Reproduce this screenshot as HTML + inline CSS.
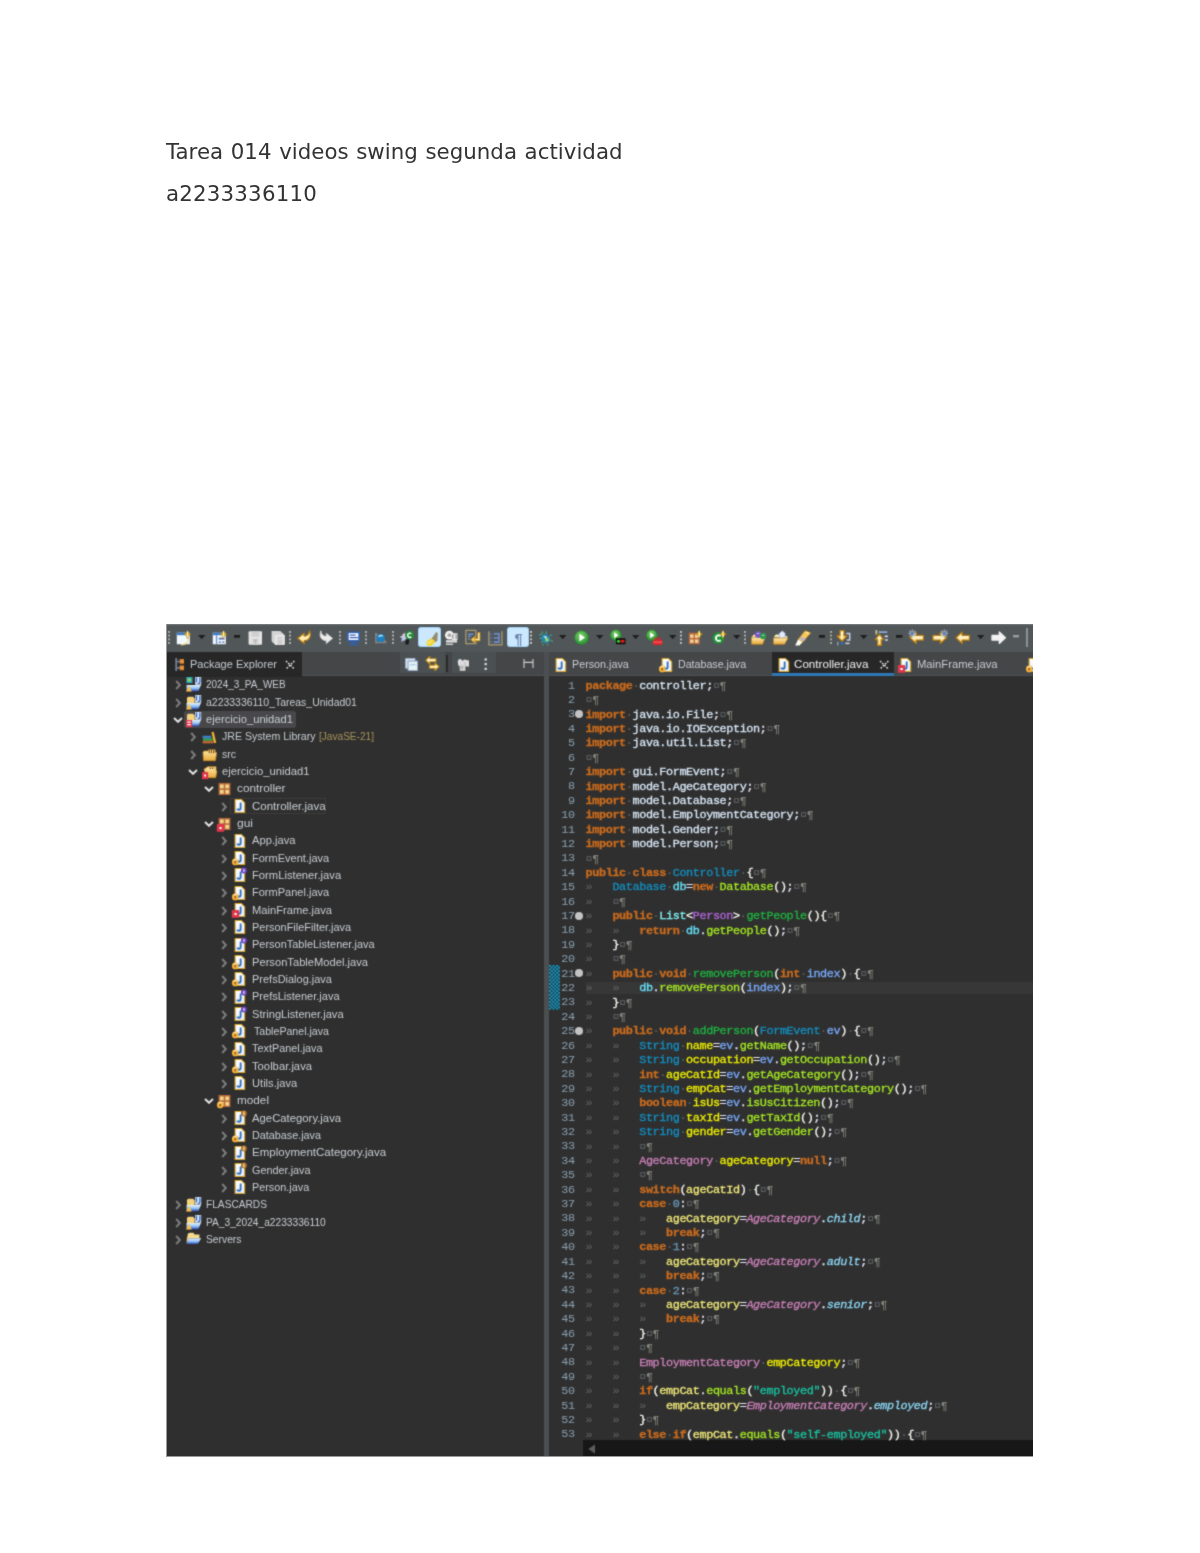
<!DOCTYPE html>
<html lang="es">
<head>
<meta charset="utf-8">
<title>Tarea 014 videos swing segunda actividad</title>
<style>
html,body{margin:0;padding:0;background:#fff;}
body{width:1200px;height:1553px;position:relative;overflow:hidden;font-family:"Liberation Sans", sans-serif;}
.h{position:absolute;left:166.1px;font-family:"DejaVu Sans", "Liberation Sans", sans-serif;font-size:21.33px;line-height:30px;color:#333;white-space:pre;margin:0;font-weight:normal;will-change:transform;}
#shot{position:absolute;left:167.0px;top:624.0px;width:866.0px;height:832.0px;background:#2f2f2f;overflow:hidden;filter:url(#soft);}
#shot div,#shot span,#shot svg{position:absolute;}
#shot span{white-space:pre;transform-origin:0 50%;}
#code span{position:static;}
#code div{white-space:pre;font-family:"Liberation Mono", monospace;}

#code div{left:418.60px;height:14.4px;line-height:14.4px;font-size:11.8px;letter-spacing:-0.381px;color:#d9e8f7;-webkit-text-stroke:0.3px;}
#code div.ln{left:auto;right:458.40px;color:#8aa0b0;text-align:right;margin-top:-0.3px;-webkit-text-stroke:0;}
#code{left:0;top:0;width:100%;height:100%;}
#code i.fo{position:absolute;left:408.00px;width:8px;height:8px;border-radius:50%;background:#c4c4c4;}
.k{color:#cc6c1d;font-weight:bold} .c{color:#1290c3} .i{color:#80f2f6} .e{color:#cc81ba} .ei{color:#cc81ba;font-style:italic}
.md{color:#1eb540} .mi{color:#a7ec21} .lv{color:#f2f200} .lr{color:#f3ec79} .p{color:#79abff} .f{color:#66e1f8}
.sf{color:#8ddaf8;font-style:italic} .s{color:#17c6a3} .n{color:#6897bb} .b{color:#f9faf4} .o{color:#e6e6fa} .ta{color:#b166da}
.w{color:#62676b;-webkit-text-stroke:0} .pm{color:#86867f;-webkit-text-stroke:0}

.edge{position:absolute;background:#333;}
</style>
</head>
<body>
<svg width="0" height="0" style="position:absolute"><defs><filter id="soft" x="0" y="0" width="1" height="1" color-interpolation-filters="sRGB"><feConvolveMatrix order="3" kernelMatrix="1 3 1 3 14 3 1 3 1" divisor="30" edgeMode="duplicate" preserveAlpha="false"/></filter></defs></svg>
<h1 class="h" style="top:137.4px;word-spacing:0.8px;letter-spacing:0.02px">Tarea 014 videos swing segunda actividad</h1>
<p class="h" style="top:179.4px;letter-spacing:0.2px">a2233336110</p>
<div class="edge" style="left:166px;top:624px;width:1px;height:832.5px;opacity:.5"></div><div class="edge" style="left:166.5px;top:1456px;width:866.5px;height:1px;opacity:.5"></div>
<div id="shot">
<div style="left:-1.00px;top:0.00px;width:868.00px;height:27.75px;background:#515658;"></div>
<div style="left:-1.00px;top:27.75px;width:378.00px;height:24.50px;background:#444648;"></div>
<div style="left:382.00px;top:27.75px;width:484.00px;height:24.50px;background:#444648;"></div>
<div style="left:-1.00px;top:27.75px;width:135.90px;height:25.00px;background:#272727;"></div>
<div style="left:605.25px;top:27.75px;width:121.50px;height:24.50px;background:#272727;"></div>
<div style="left:605.25px;top:49.00px;width:121.50px;height:3.30px;background:#2e78b8;"></div>
<div style="left:377.00px;top:27.75px;width:5.00px;height:804.75px;background:#4b4f51;"></div>
<div style="left:135.00px;top:51.05px;width:242.00px;height:1.20px;background:#4e5052;"></div>
<div style="left:382.00px;top:51.05px;width:223.25px;height:1.20px;background:#4e5052;"></div>
<div style="left:726.75px;top:51.05px;width:139.25px;height:1.20px;background:#4e5052;"></div>
<div style="left:233.00px;top:28.40px;width:44.60px;height:21.00px;background:#4b5052;border-radius:1px;"></div>
<div style="left:279.00px;top:30.60px;width:1.80px;height:17.40px;background:#2a2a2a;"></div>
<div style="left:284.90px;top:28.40px;width:43.80px;height:21.00px;background:#4b5052;border-radius:1px;"></div>
<span style='top:32.30px;font-size:11.8px;line-height:16px;color:#c9cdd2;left:23.00px;transform:scaleX(0.934);'>Package Explorer</span>
<span style='top:32.30px;font-size:11.8px;line-height:16px;color:#c9cdd2;left:405.00px;transform:scaleX(0.911);'>Person.java</span>
<span style='top:32.30px;font-size:11.8px;line-height:16px;color:#c9cdd2;left:510.50px;transform:scaleX(0.903);'>Database.java</span>
<span style='top:32.30px;font-size:11.8px;line-height:16px;color:#f0f0f0;left:627.40px;transform:scaleX(0.986);'>Controller.java</span>
<span style='top:32.30px;font-size:11.8px;line-height:16px;color:#c9cdd2;left:750.00px;transform:scaleX(0.952);'>MainFrame.java</span>
<div style="left:16.60px;top:86.60px;width:112.80px;height:17.40px;background:#48484a;border-radius:2.5px;"></div>
<div style="left:63.40px;top:173.60px;width:96px;height:16px;border:0.7px solid #3d3d3d;box-sizing:border-box;"></div>
<svg width="0" height="0" style="left:0;top:0"><defs>
<linearGradient id="gy" x1="0" y1="0" x2="0" y2="1"><stop offset="0" stop-color="#fffdf2"/><stop offset="1" stop-color="#ffe08a"/></linearGradient>
<linearGradient id="gb" x1="0" y1="0" x2="0" y2="1"><stop offset="0" stop-color="#eaf4ff"/><stop offset="0.55" stop-color="#8fc0f5"/><stop offset="1" stop-color="#2c49b8"/></linearGradient>
<linearGradient id="gp" x1="0" y1="0" x2="0" y2="1"><stop offset="0" stop-color="#ffffff"/><stop offset="1" stop-color="#e4ecfb"/></linearGradient>
<radialGradient id="gg" cx="0.45" cy="0.35" r="0.7"><stop offset="0" stop-color="#7fd06a"/><stop offset="1" stop-color="#1f8f2c"/></radialGradient>
<linearGradient id="gf" x1="0" y1="0" x2="0" y2="1"><stop offset="0" stop-color="#fdecb0"/><stop offset="1" stop-color="#e9a93a"/></linearGradient>
</defs></svg>
<svg style="left:8.10px;top:56.30px;" width="6.00" height="10.00" viewBox="0 0 6 10"><path d="M1.2 1 L4.8 5 L1.2 9" fill="none" stroke="#7c7c7c" stroke-width="2"/></svg>
<svg style="left:19.20px;top:53.30px;overflow:visible;" width="15.40" height="15.40" viewBox="0 0 16 16"><rect x="0.4" y="0" width="6.4" height="6.4" fill="#2aa6b8"/><circle cx="3.4" cy="3" r="2" fill="#8fd06a"/><rect x="9.6" y="0" width="6.2" height="8" fill="#e8f0ff"/><path d="M11 0.6v5.2M14.4 0.6v4.6c0 1.4-1 1.8-2.2 1.6" fill="none" stroke="#3a6fc4" stroke-width="1.5"/><path d="M0.6 8.2h15l-2.8 6.6h-12.2z" fill="url(#gb)"/><path d="M3 8.8l3 6.4h-6z" fill="#f6c04a"/></svg>
<span style='top:52.40px;font-size:11.8px;line-height:16px;color:#c9cdd2;left:39.00px;transform:scaleX(0.845);'>2024_3_PA_WEB</span>
<svg style="left:8.10px;top:73.63px;" width="6.00" height="10.00" viewBox="0 0 6 10"><path d="M1.2 1 L4.8 5 L1.2 9" fill="none" stroke="#7c7c7c" stroke-width="2"/></svg>
<svg style="left:19.20px;top:70.63px;overflow:visible;" width="15.40" height="15.40" viewBox="0 0 16 16"><path d="M1 3.4c0-1 1-1.6 2-1.6h4.4l1.6 1.8v4.6h-8z" fill="#f5d27c"/><rect x="9.6" y="0" width="6.2" height="8" fill="#e8f0ff"/><path d="M11 0.6v5.2M14.4 0.6v4.6c0 1.4-1 1.8-2.2 1.6" fill="none" stroke="#3a6fc4" stroke-width="1.5"/><path d="M0.6 8.2h15l-2.8 6.6h-12.2z" fill="url(#gb)"/><path d="M3 8.8l3 6.4h-6z" fill="#f6c04a"/></svg>
<span style='top:69.73px;font-size:11.8px;line-height:16px;color:#c9cdd2;left:39.00px;transform:scaleX(0.886);'>a2233336110_Tareas_Unidad01</span>
<svg style="left:6.10px;top:92.96px;" width="10.00" height="6.00" viewBox="0 0 10 6"><path d="M1 1 L5 4.800 L9 1" fill="none" stroke="#e2e2e2" stroke-width="2"/></svg>
<svg style="left:19.20px;top:87.96px;overflow:visible;" width="15.40" height="15.40" viewBox="0 0 16 16"><path d="M1 3.4c0-1 1-1.6 2-1.6h4.4l1.6 1.8v4.6h-8z" fill="#f5d27c"/><rect x="9.6" y="0" width="6.2" height="8" fill="#e8f0ff"/><path d="M11 0.6v5.2M14.4 0.6v4.6c0 1.4-1 1.8-2.2 1.6" fill="none" stroke="#3a6fc4" stroke-width="1.5"/><path d="M0.6 8.2h15l-2.8 6.6h-12.2z" fill="url(#gb)"/><rect x="0" y="8.4" width="6.4" height="7.4" fill="#e0364a"/><path d="M1.4 10.6h3.6m-3.6 2.6h3.6" stroke="#fff" stroke-width="1.2"/></svg>
<span style='top:87.06px;font-size:11.8px;line-height:16px;color:#c9cdd2;left:39.00px;transform:scaleX(0.947);'>ejercicio_unidad1</span>
<svg style="left:23.00px;top:108.29px;" width="6.00" height="10.00" viewBox="0 0 6 10"><path d="M1.2 1 L4.8 5 L1.2 9" fill="none" stroke="#7c7c7c" stroke-width="2"/></svg>
<svg style="left:34.60px;top:105.29px;overflow:visible;" width="15.40" height="15.40" viewBox="0 0 16 16"><rect x="0.6" y="7" width="9" height="2.6" fill="#3f7fc9"/><rect x="1" y="9.6" width="10" height="2.6" fill="#2fa25a"/><rect x="0.6" y="12.2" width="11" height="2.8" fill="#b8652e"/><path d="M11 3l2.6 11.6" stroke="#f3b42e" stroke-width="2.4"/></svg>
<span style='top:104.39px;font-size:11.8px;line-height:16px;color:#c9cdd2;left:54.50px;transform:scaleX(0.897);'>JRE System Library</span>
<span style='top:104.39px;font-size:11.8px;line-height:16px;color:#a9935c;left:152.00px;transform:scaleX(0.856);'>[JavaSE-21]</span>
<svg style="left:23.00px;top:125.62px;" width="6.00" height="10.00" viewBox="0 0 6 10"><path d="M1.2 1 L4.8 5 L1.2 9" fill="none" stroke="#7c7c7c" stroke-width="2"/></svg>
<svg style="left:34.60px;top:122.62px;overflow:visible;" width="15.40" height="15.40" viewBox="0 0 16 16"><path d="M1 6c0-1 .6-1.8 1.8-1.8h3.8v-1.4h7v3h1.6l-1.2 8.4h-12.4z" fill="url(#gf)" stroke="#c98b22" stroke-width="0.8"/><path d="M7.6 2.6v4m2.2-4.6v4.6m2.2-4v4" stroke="#7a4a1a" stroke-width="1.1"/></svg>
<span style='top:121.72px;font-size:11.8px;line-height:16px;color:#c9cdd2;left:54.50px;transform:scaleX(0.896);'>src</span>
<svg style="left:21.00px;top:144.95px;" width="10.00" height="6.00" viewBox="0 0 10 6"><path d="M1 1 L5 4.800 L9 1" fill="none" stroke="#e2e2e2" stroke-width="2"/></svg>
<svg style="left:34.60px;top:139.95px;overflow:visible;" width="15.40" height="15.40" viewBox="0 0 16 16"><path d="M2 5.4l4-2.6h8.6v4l1 .6-1.4 6.8h-9z" fill="url(#gf)" stroke="#c98b22" stroke-width="0.8"/><path d="M8 4.4h5" stroke="#7a4a1a" stroke-width="1.6" stroke-dasharray="1.4 1"/><rect x="0" y="8.4" width="6.4" height="7.4" fill="#e0364a"/><rect x="2.2" y="11" width="2" height="2" fill="#fff"/></svg>
<span style='top:139.05px;font-size:11.8px;line-height:16px;color:#c9cdd2;left:54.50px;transform:scaleX(0.953);'>ejercicio_unidad1</span>
<svg style="left:36.70px;top:162.28px;" width="10.00" height="6.00" viewBox="0 0 10 6"><path d="M1 1 L5 4.800 L9 1" fill="none" stroke="#e2e2e2" stroke-width="2"/></svg>
<svg style="left:50.00px;top:157.28px;overflow:visible;" width="15.40" height="15.40" viewBox="0 0 16 16"><rect x="1.6" y="2" width="12.4" height="12.6" fill="#b4653a"/><rect x="3" y="3.6" width="4" height="4" fill="#f1d48a"/><rect x="8.6" y="3.6" width="4" height="4" fill="#f1d48a"/><rect x="3" y="9.2" width="4" height="4" fill="#f1d48a"/><rect x="8.6" y="9.2" width="4" height="4" fill="#f1d48a"/></svg>
<span style='top:156.38px;font-size:11.8px;line-height:16px;color:#c9cdd2;left:70.00px;'>controller</span>
<svg style="left:53.90px;top:177.61px;" width="6.00" height="10.00" viewBox="0 0 6 10"><path d="M1.2 1 L4.8 5 L1.2 9" fill="none" stroke="#7c7c7c" stroke-width="2"/></svg>
<svg style="left:65.40px;top:174.01px;overflow:visible;" width="15.40" height="15.40" viewBox="0 0 16 16"><path d="M3.2 1.6h6.6l3.4 3.4v10h-10z" fill="url(#gp)" stroke="#d5a327" stroke-width="1.1" stroke-linejoin="round"/><path d="M9 4.6v5.6c0 1.4-.8 2-1.9 2-.8 0-1.4-.3-1.8-1" fill="none" stroke="#2e6cb6" stroke-width="1.9"/></svg>
<span style='top:173.71px;font-size:11.8px;line-height:16px;color:#c9cdd2;left:85.40px;transform:scaleX(0.976);'>Controller.java</span>
<svg style="left:36.70px;top:196.94px;" width="10.00" height="6.00" viewBox="0 0 10 6"><path d="M1 1 L5 4.800 L9 1" fill="none" stroke="#e2e2e2" stroke-width="2"/></svg>
<svg style="left:50.00px;top:191.94px;overflow:visible;" width="15.40" height="15.40" viewBox="0 0 16 16"><rect x="1.6" y="2" width="12.4" height="12.6" fill="#b4653a"/><rect x="3" y="3.6" width="4" height="4" fill="#f1d48a"/><rect x="8.6" y="3.6" width="4" height="4" fill="#f1d48a"/><rect x="3" y="9.2" width="4" height="4" fill="#f1d48a"/><rect x="8.6" y="9.2" width="4" height="4" fill="#f1d48a"/><rect x="-0.200" y="8.400" width="7.600" height="8" fill="#e0364a"/><rect x="2.600" y="11.400" width="2.200" height="2.200" fill="#fff"/></svg>
<span style='top:191.04px;font-size:11.8px;line-height:16px;color:#c9cdd2;left:70.00px;transform:scaleX(1.016);'>gui</span>
<svg style="left:53.90px;top:212.27px;" width="6.00" height="10.00" viewBox="0 0 6 10"><path d="M1.2 1 L4.8 5 L1.2 9" fill="none" stroke="#7c7c7c" stroke-width="2"/></svg>
<svg style="left:65.40px;top:208.67px;overflow:visible;" width="15.40" height="15.40" viewBox="0 0 16 16"><path d="M3.2 1.6h6.6l3.4 3.4v10h-10z" fill="url(#gp)" stroke="#d5a327" stroke-width="1.1" stroke-linejoin="round"/><path d="M9 4.6v5.6c0 1.4-.8 2-1.9 2-.8 0-1.4-.3-1.8-1" fill="none" stroke="#2e6cb6" stroke-width="1.9"/></svg>
<span style='top:208.37px;font-size:11.8px;line-height:16px;color:#c9cdd2;left:85.40px;transform:scaleX(0.949);'>App.java</span>
<svg style="left:53.90px;top:229.60px;" width="6.00" height="10.00" viewBox="0 0 6 10"><path d="M1.2 1 L4.8 5 L1.2 9" fill="none" stroke="#7c7c7c" stroke-width="2"/></svg>
<svg style="left:65.40px;top:226.00px;overflow:visible;" width="15.40" height="15.40" viewBox="0 0 16 16"><path d="M3.2 1.6h6.6l3.4 3.4v10h-10z" fill="url(#gp)" stroke="#d5a327" stroke-width="1.1" stroke-linejoin="round"/><path d="M9 4.6v5.6c0 1.4-.8 2-1.9 2-.8 0-1.4-.3-1.8-1" fill="none" stroke="#2e6cb6" stroke-width="1.9"/><ellipse cx="3.300" cy="12.400" rx="3.400" ry="3.500" fill="#f3b23e"/><path d="M1.400 10.800c.8-1.400 3-1.400 3.800 0" fill="none" stroke="#fff4d8" stroke-width="1"/><rect x="2.500" y="11.600" width="1.600" height="2.200" fill="#8a5a12"/></svg>
<span style='top:225.70px;font-size:11.8px;line-height:16px;color:#c9cdd2;left:85.40px;transform:scaleX(0.935);'>FormEvent.java</span>
<svg style="left:53.90px;top:246.93px;" width="6.00" height="10.00" viewBox="0 0 6 10"><path d="M1.2 1 L4.8 5 L1.2 9" fill="none" stroke="#7c7c7c" stroke-width="2"/></svg>
<svg style="left:65.40px;top:243.33px;overflow:visible;" width="15.40" height="15.40" viewBox="0 0 16 16"><path d="M3.2 1.6h6.6l3.4 3.4v10h-10z" fill="url(#gp)" stroke="#d5a327" stroke-width="1.1" stroke-linejoin="round"/><path d="M9 4.6v5.6c0 1.4-.8 2-1.9 2-.8 0-1.4-.3-1.8-1" fill="none" stroke="#2e6cb6" stroke-width="1.9"/><circle cx="12.4" cy="3.6" r="3.1" fill="#6a45c2"/><path d="M12.4 2v3.2" stroke="#fff" stroke-width="1.1"/></svg>
<span style='top:243.03px;font-size:11.8px;line-height:16px;color:#c9cdd2;left:85.40px;transform:scaleX(0.951);'>FormListener.java</span>
<svg style="left:53.90px;top:264.26px;" width="6.00" height="10.00" viewBox="0 0 6 10"><path d="M1.2 1 L4.8 5 L1.2 9" fill="none" stroke="#7c7c7c" stroke-width="2"/></svg>
<svg style="left:65.40px;top:260.66px;overflow:visible;" width="15.40" height="15.40" viewBox="0 0 16 16"><path d="M3.2 1.6h6.6l3.4 3.4v10h-10z" fill="url(#gp)" stroke="#d5a327" stroke-width="1.1" stroke-linejoin="round"/><path d="M9 4.6v5.6c0 1.4-.8 2-1.9 2-.8 0-1.4-.3-1.8-1" fill="none" stroke="#2e6cb6" stroke-width="1.9"/><ellipse cx="3.300" cy="12.400" rx="3.400" ry="3.500" fill="#f3b23e"/><path d="M1.400 10.800c.8-1.400 3-1.400 3.800 0" fill="none" stroke="#fff4d8" stroke-width="1"/><rect x="2.500" y="11.600" width="1.600" height="2.200" fill="#8a5a12"/></svg>
<span style='top:260.36px;font-size:11.8px;line-height:16px;color:#c9cdd2;left:85.40px;transform:scaleX(0.934);'>FormPanel.java</span>
<svg style="left:53.90px;top:281.59px;" width="6.00" height="10.00" viewBox="0 0 6 10"><path d="M1.2 1 L4.8 5 L1.2 9" fill="none" stroke="#7c7c7c" stroke-width="2"/></svg>
<svg style="left:65.40px;top:277.99px;overflow:visible;" width="15.40" height="15.40" viewBox="0 0 16 16"><path d="M3.2 1.6h6.6l3.4 3.4v10h-10z" fill="url(#gp)" stroke="#d5a327" stroke-width="1.1" stroke-linejoin="round"/><path d="M9 4.6v5.6c0 1.4-.8 2-1.9 2-.8 0-1.4-.3-1.8-1" fill="none" stroke="#2e6cb6" stroke-width="1.9"/><rect x="-0.200" y="8.400" width="7.600" height="8" fill="#e0364a"/><rect x="2.600" y="11.400" width="2.200" height="2.200" fill="#fff"/></svg>
<span style='top:277.69px;font-size:11.8px;line-height:16px;color:#c9cdd2;left:85.40px;transform:scaleX(0.946);'>MainFrame.java</span>
<svg style="left:53.90px;top:298.92px;" width="6.00" height="10.00" viewBox="0 0 6 10"><path d="M1.2 1 L4.8 5 L1.2 9" fill="none" stroke="#7c7c7c" stroke-width="2"/></svg>
<svg style="left:65.40px;top:295.32px;overflow:visible;" width="15.40" height="15.40" viewBox="0 0 16 16"><path d="M3.2 1.6h6.6l3.4 3.4v10h-10z" fill="url(#gp)" stroke="#d5a327" stroke-width="1.1" stroke-linejoin="round"/><path d="M9 4.6v5.6c0 1.4-.8 2-1.9 2-.8 0-1.4-.3-1.8-1" fill="none" stroke="#2e6cb6" stroke-width="1.9"/></svg>
<span style='top:295.02px;font-size:11.8px;line-height:16px;color:#c9cdd2;left:85.40px;transform:scaleX(0.928);'>PersonFileFilter.java</span>
<svg style="left:53.90px;top:316.25px;" width="6.00" height="10.00" viewBox="0 0 6 10"><path d="M1.2 1 L4.8 5 L1.2 9" fill="none" stroke="#7c7c7c" stroke-width="2"/></svg>
<svg style="left:65.40px;top:312.65px;overflow:visible;" width="15.40" height="15.40" viewBox="0 0 16 16"><path d="M3.2 1.6h6.6l3.4 3.4v10h-10z" fill="url(#gp)" stroke="#d5a327" stroke-width="1.1" stroke-linejoin="round"/><path d="M9 4.6v5.6c0 1.4-.8 2-1.9 2-.8 0-1.4-.3-1.8-1" fill="none" stroke="#2e6cb6" stroke-width="1.9"/><circle cx="12.4" cy="3.6" r="3.1" fill="#6a45c2"/><path d="M12.4 2v3.2" stroke="#fff" stroke-width="1.1"/></svg>
<span style='top:312.35px;font-size:11.8px;line-height:16px;color:#c9cdd2;left:85.40px;transform:scaleX(0.930);'>PersonTableListener.java</span>
<svg style="left:53.90px;top:333.58px;" width="6.00" height="10.00" viewBox="0 0 6 10"><path d="M1.2 1 L4.8 5 L1.2 9" fill="none" stroke="#7c7c7c" stroke-width="2"/></svg>
<svg style="left:65.40px;top:329.98px;overflow:visible;" width="15.40" height="15.40" viewBox="0 0 16 16"><path d="M3.2 1.6h6.6l3.4 3.4v10h-10z" fill="url(#gp)" stroke="#d5a327" stroke-width="1.1" stroke-linejoin="round"/><path d="M9 4.6v5.6c0 1.4-.8 2-1.9 2-.8 0-1.4-.3-1.8-1" fill="none" stroke="#2e6cb6" stroke-width="1.9"/><ellipse cx="3.300" cy="12.400" rx="3.400" ry="3.500" fill="#f3b23e"/><path d="M1.400 10.800c.8-1.400 3-1.400 3.800 0" fill="none" stroke="#fff4d8" stroke-width="1"/><rect x="2.500" y="11.600" width="1.600" height="2.200" fill="#8a5a12"/></svg>
<span style='top:329.68px;font-size:11.8px;line-height:16px;color:#c9cdd2;left:85.40px;transform:scaleX(0.946);'>PersonTableModel.java</span>
<svg style="left:53.90px;top:350.91px;" width="6.00" height="10.00" viewBox="0 0 6 10"><path d="M1.2 1 L4.8 5 L1.2 9" fill="none" stroke="#7c7c7c" stroke-width="2"/></svg>
<svg style="left:65.40px;top:347.31px;overflow:visible;" width="15.40" height="15.40" viewBox="0 0 16 16"><path d="M3.2 1.6h6.6l3.4 3.4v10h-10z" fill="url(#gp)" stroke="#d5a327" stroke-width="1.1" stroke-linejoin="round"/><path d="M9 4.6v5.6c0 1.4-.8 2-1.9 2-.8 0-1.4-.3-1.8-1" fill="none" stroke="#2e6cb6" stroke-width="1.9"/><ellipse cx="3.300" cy="12.400" rx="3.400" ry="3.500" fill="#f3b23e"/><path d="M1.400 10.800c.8-1.400 3-1.400 3.800 0" fill="none" stroke="#fff4d8" stroke-width="1"/><rect x="2.500" y="11.600" width="1.600" height="2.200" fill="#8a5a12"/></svg>
<span style='top:347.01px;font-size:11.8px;line-height:16px;color:#c9cdd2;left:85.40px;transform:scaleX(0.931);'>PrefsDialog.java</span>
<svg style="left:53.90px;top:368.24px;" width="6.00" height="10.00" viewBox="0 0 6 10"><path d="M1.2 1 L4.8 5 L1.2 9" fill="none" stroke="#7c7c7c" stroke-width="2"/></svg>
<svg style="left:65.40px;top:364.64px;overflow:visible;" width="15.40" height="15.40" viewBox="0 0 16 16"><path d="M3.2 1.6h6.6l3.4 3.4v10h-10z" fill="url(#gp)" stroke="#d5a327" stroke-width="1.1" stroke-linejoin="round"/><path d="M9 4.6v5.6c0 1.4-.8 2-1.9 2-.8 0-1.4-.3-1.8-1" fill="none" stroke="#2e6cb6" stroke-width="1.9"/><circle cx="12.4" cy="3.6" r="3.1" fill="#6a45c2"/><path d="M12.4 2v3.2" stroke="#fff" stroke-width="1.1"/></svg>
<span style='top:364.34px;font-size:11.8px;line-height:16px;color:#c9cdd2;left:85.40px;transform:scaleX(0.934);'>PrefsListener.java</span>
<svg style="left:53.90px;top:385.57px;" width="6.00" height="10.00" viewBox="0 0 6 10"><path d="M1.2 1 L4.8 5 L1.2 9" fill="none" stroke="#7c7c7c" stroke-width="2"/></svg>
<svg style="left:65.40px;top:381.97px;overflow:visible;" width="15.40" height="15.40" viewBox="0 0 16 16"><path d="M3.2 1.6h6.6l3.4 3.4v10h-10z" fill="url(#gp)" stroke="#d5a327" stroke-width="1.1" stroke-linejoin="round"/><path d="M9 4.6v5.6c0 1.4-.8 2-1.9 2-.8 0-1.4-.3-1.8-1" fill="none" stroke="#2e6cb6" stroke-width="1.9"/><circle cx="12.4" cy="3.6" r="3.1" fill="#6a45c2"/><path d="M12.4 2v3.2" stroke="#fff" stroke-width="1.1"/></svg>
<span style='top:381.67px;font-size:11.8px;line-height:16px;color:#c9cdd2;left:85.40px;transform:scaleX(0.944);'>StringListener.java</span>
<svg style="left:53.90px;top:402.90px;" width="6.00" height="10.00" viewBox="0 0 6 10"><path d="M1.2 1 L4.8 5 L1.2 9" fill="none" stroke="#7c7c7c" stroke-width="2"/></svg>
<svg style="left:65.40px;top:399.30px;overflow:visible;" width="15.40" height="15.40" viewBox="0 0 16 16"><path d="M3.2 1.6h6.6l3.4 3.4v10h-10z" fill="url(#gp)" stroke="#d5a327" stroke-width="1.1" stroke-linejoin="round"/><path d="M9 4.6v5.6c0 1.4-.8 2-1.9 2-.8 0-1.4-.3-1.8-1" fill="none" stroke="#2e6cb6" stroke-width="1.9"/><ellipse cx="3.300" cy="12.400" rx="3.400" ry="3.500" fill="#f3b23e"/><path d="M1.400 10.800c.8-1.400 3-1.400 3.800 0" fill="none" stroke="#fff4d8" stroke-width="1"/><rect x="2.500" y="11.600" width="1.600" height="2.200" fill="#8a5a12"/></svg>
<span style='top:399.00px;font-size:11.8px;line-height:16px;color:#c9cdd2;left:87.00px;transform:scaleX(0.900);'>TablePanel.java</span>
<svg style="left:53.90px;top:420.23px;" width="6.00" height="10.00" viewBox="0 0 6 10"><path d="M1.2 1 L4.8 5 L1.2 9" fill="none" stroke="#7c7c7c" stroke-width="2"/></svg>
<svg style="left:65.40px;top:416.63px;overflow:visible;" width="15.40" height="15.40" viewBox="0 0 16 16"><path d="M3.2 1.6h6.6l3.4 3.4v10h-10z" fill="url(#gp)" stroke="#d5a327" stroke-width="1.1" stroke-linejoin="round"/><path d="M9 4.6v5.6c0 1.4-.8 2-1.9 2-.8 0-1.4-.3-1.8-1" fill="none" stroke="#2e6cb6" stroke-width="1.9"/><ellipse cx="3.300" cy="12.400" rx="3.400" ry="3.500" fill="#f3b23e"/><path d="M1.400 10.800c.8-1.400 3-1.400 3.800 0" fill="none" stroke="#fff4d8" stroke-width="1"/><rect x="2.500" y="11.600" width="1.600" height="2.200" fill="#8a5a12"/></svg>
<span style='top:416.33px;font-size:11.8px;line-height:16px;color:#c9cdd2;left:85.40px;transform:scaleX(0.920);'>TextPanel.java</span>
<svg style="left:53.90px;top:437.56px;" width="6.00" height="10.00" viewBox="0 0 6 10"><path d="M1.2 1 L4.8 5 L1.2 9" fill="none" stroke="#7c7c7c" stroke-width="2"/></svg>
<svg style="left:65.40px;top:433.96px;overflow:visible;" width="15.40" height="15.40" viewBox="0 0 16 16"><path d="M3.2 1.6h6.6l3.4 3.4v10h-10z" fill="url(#gp)" stroke="#d5a327" stroke-width="1.1" stroke-linejoin="round"/><path d="M9 4.6v5.6c0 1.4-.8 2-1.9 2-.8 0-1.4-.3-1.8-1" fill="none" stroke="#2e6cb6" stroke-width="1.9"/><ellipse cx="3.300" cy="12.400" rx="3.400" ry="3.500" fill="#f3b23e"/><path d="M1.400 10.800c.8-1.400 3-1.400 3.800 0" fill="none" stroke="#fff4d8" stroke-width="1"/><rect x="2.500" y="11.600" width="1.600" height="2.200" fill="#8a5a12"/></svg>
<span style='top:433.66px;font-size:11.8px;line-height:16px;color:#c9cdd2;left:85.40px;transform:scaleX(0.953);'>Toolbar.java</span>
<svg style="left:53.90px;top:454.89px;" width="6.00" height="10.00" viewBox="0 0 6 10"><path d="M1.2 1 L4.8 5 L1.2 9" fill="none" stroke="#7c7c7c" stroke-width="2"/></svg>
<svg style="left:65.40px;top:451.29px;overflow:visible;" width="15.40" height="15.40" viewBox="0 0 16 16"><path d="M3.2 1.6h6.6l3.4 3.4v10h-10z" fill="url(#gp)" stroke="#d5a327" stroke-width="1.1" stroke-linejoin="round"/><path d="M9 4.6v5.6c0 1.4-.8 2-1.9 2-.8 0-1.4-.3-1.8-1" fill="none" stroke="#2e6cb6" stroke-width="1.9"/></svg>
<span style='top:450.99px;font-size:11.8px;line-height:16px;color:#c9cdd2;left:85.40px;transform:scaleX(0.944);'>Utils.java</span>
<svg style="left:36.70px;top:474.22px;" width="10.00" height="6.00" viewBox="0 0 10 6"><path d="M1 1 L5 4.800 L9 1" fill="none" stroke="#e2e2e2" stroke-width="2"/></svg>
<svg style="left:50.00px;top:469.22px;overflow:visible;" width="15.40" height="15.40" viewBox="0 0 16 16"><rect x="1.6" y="2" width="12.4" height="12.6" fill="#b4653a"/><rect x="3" y="3.6" width="4" height="4" fill="#f1d48a"/><rect x="8.6" y="3.6" width="4" height="4" fill="#f1d48a"/><rect x="3" y="9.2" width="4" height="4" fill="#f1d48a"/><rect x="8.6" y="9.2" width="4" height="4" fill="#f1d48a"/><ellipse cx="3.300" cy="12.400" rx="3.400" ry="3.500" fill="#f3b23e"/><path d="M1.400 10.800c.8-1.400 3-1.400 3.800 0" fill="none" stroke="#fff4d8" stroke-width="1"/><rect x="2.500" y="11.600" width="1.600" height="2.200" fill="#8a5a12"/></svg>
<span style='top:468.32px;font-size:11.8px;line-height:16px;color:#c9cdd2;left:70.00px;transform:scaleX(0.996);'>model</span>
<svg style="left:53.90px;top:489.55px;" width="6.00" height="10.00" viewBox="0 0 6 10"><path d="M1.2 1 L4.8 5 L1.2 9" fill="none" stroke="#7c7c7c" stroke-width="2"/></svg>
<svg style="left:65.40px;top:485.95px;overflow:visible;" width="15.40" height="15.40" viewBox="0 0 16 16"><path d="M3.2 1.6h6.6l3.4 3.4v10h-10z" fill="url(#gp)" stroke="#d5a327" stroke-width="1.1" stroke-linejoin="round"/><path d="M9 4.6v5.6c0 1.4-.8 2-1.9 2-.8 0-1.4-.3-1.8-1" fill="none" stroke="#2e6cb6" stroke-width="1.9"/><circle cx="12.4" cy="3.6" r="3.1" fill="#b0701e"/><path d="M11.4 2.2h2m-2 1.4h1.6m-1.6 1.4h2" stroke="#fff" stroke-width="0.8"/></svg>
<span style='top:485.65px;font-size:11.8px;line-height:16px;color:#c9cdd2;left:85.40px;transform:scaleX(0.959);'>AgeCategory.java</span>
<svg style="left:53.90px;top:506.88px;" width="6.00" height="10.00" viewBox="0 0 6 10"><path d="M1.2 1 L4.8 5 L1.2 9" fill="none" stroke="#7c7c7c" stroke-width="2"/></svg>
<svg style="left:65.40px;top:503.28px;overflow:visible;" width="15.40" height="15.40" viewBox="0 0 16 16"><path d="M3.2 1.6h6.6l3.4 3.4v10h-10z" fill="url(#gp)" stroke="#d5a327" stroke-width="1.1" stroke-linejoin="round"/><path d="M9 4.6v5.6c0 1.4-.8 2-1.9 2-.8 0-1.4-.3-1.8-1" fill="none" stroke="#2e6cb6" stroke-width="1.9"/><ellipse cx="3.300" cy="12.400" rx="3.400" ry="3.500" fill="#f3b23e"/><path d="M1.400 10.800c.8-1.400 3-1.400 3.800 0" fill="none" stroke="#fff4d8" stroke-width="1"/><rect x="2.500" y="11.600" width="1.600" height="2.200" fill="#8a5a12"/></svg>
<span style='top:502.98px;font-size:11.8px;line-height:16px;color:#c9cdd2;left:85.40px;transform:scaleX(0.914);'>Database.java</span>
<svg style="left:53.90px;top:524.21px;" width="6.00" height="10.00" viewBox="0 0 6 10"><path d="M1.2 1 L4.8 5 L1.2 9" fill="none" stroke="#7c7c7c" stroke-width="2"/></svg>
<svg style="left:65.40px;top:520.61px;overflow:visible;" width="15.40" height="15.40" viewBox="0 0 16 16"><path d="M3.2 1.6h6.6l3.4 3.4v10h-10z" fill="url(#gp)" stroke="#d5a327" stroke-width="1.1" stroke-linejoin="round"/><path d="M9 4.6v5.6c0 1.4-.8 2-1.9 2-.8 0-1.4-.3-1.8-1" fill="none" stroke="#2e6cb6" stroke-width="1.9"/><circle cx="12.4" cy="3.6" r="3.1" fill="#b0701e"/><path d="M11.4 2.2h2m-2 1.4h1.6m-1.6 1.4h2" stroke="#fff" stroke-width="0.8"/></svg>
<span style='top:520.31px;font-size:11.8px;line-height:16px;color:#c9cdd2;left:85.40px;transform:scaleX(0.976);'>EmploymentCategory.java</span>
<svg style="left:53.90px;top:541.54px;" width="6.00" height="10.00" viewBox="0 0 6 10"><path d="M1.2 1 L4.8 5 L1.2 9" fill="none" stroke="#7c7c7c" stroke-width="2"/></svg>
<svg style="left:65.40px;top:537.94px;overflow:visible;" width="15.40" height="15.40" viewBox="0 0 16 16"><path d="M3.2 1.6h6.6l3.4 3.4v10h-10z" fill="url(#gp)" stroke="#d5a327" stroke-width="1.1" stroke-linejoin="round"/><path d="M9 4.6v5.6c0 1.4-.8 2-1.9 2-.8 0-1.4-.3-1.8-1" fill="none" stroke="#2e6cb6" stroke-width="1.9"/><circle cx="12.4" cy="3.6" r="3.1" fill="#b0701e"/><path d="M11.4 2.2h2m-2 1.4h1.6m-1.6 1.4h2" stroke="#fff" stroke-width="0.8"/></svg>
<span style='top:537.64px;font-size:11.8px;line-height:16px;color:#c9cdd2;left:85.40px;transform:scaleX(0.921);'>Gender.java</span>
<svg style="left:53.90px;top:558.87px;" width="6.00" height="10.00" viewBox="0 0 6 10"><path d="M1.2 1 L4.8 5 L1.2 9" fill="none" stroke="#7c7c7c" stroke-width="2"/></svg>
<svg style="left:65.40px;top:555.27px;overflow:visible;" width="15.40" height="15.40" viewBox="0 0 16 16"><path d="M3.2 1.6h6.6l3.4 3.4v10h-10z" fill="url(#gp)" stroke="#d5a327" stroke-width="1.1" stroke-linejoin="round"/><path d="M9 4.6v5.6c0 1.4-.8 2-1.9 2-.8 0-1.4-.3-1.8-1" fill="none" stroke="#2e6cb6" stroke-width="1.9"/></svg>
<span style='top:554.97px;font-size:11.8px;line-height:16px;color:#c9cdd2;left:85.40px;transform:scaleX(0.918);'>Person.java</span>
<svg style="left:8.10px;top:576.20px;" width="6.00" height="10.00" viewBox="0 0 6 10"><path d="M1.2 1 L4.8 5 L1.2 9" fill="none" stroke="#7c7c7c" stroke-width="2"/></svg>
<svg style="left:19.20px;top:573.20px;overflow:visible;" width="15.40" height="15.40" viewBox="0 0 16 16"><path d="M1 3.4c0-1 1-1.6 2-1.6h4.4l1.6 1.8v4.6h-8z" fill="#f5d27c"/><rect x="9.6" y="0" width="6.2" height="8" fill="#e8f0ff"/><path d="M11 0.6v5.2M14.4 0.6v4.6c0 1.4-1 1.8-2.2 1.6" fill="none" stroke="#3a6fc4" stroke-width="1.5"/><path d="M0.6 8.2h15l-2.8 6.6h-12.2z" fill="url(#gb)"/><path d="M3 8.8l3 6.4h-6z" fill="#f6c04a"/></svg>
<span style='top:572.30px;font-size:11.8px;line-height:16px;color:#c9cdd2;left:39.00px;transform:scaleX(0.861);'>FLASCARDS</span>
<svg style="left:8.10px;top:593.53px;" width="6.00" height="10.00" viewBox="0 0 6 10"><path d="M1.2 1 L4.8 5 L1.2 9" fill="none" stroke="#7c7c7c" stroke-width="2"/></svg>
<svg style="left:19.20px;top:590.53px;overflow:visible;" width="15.40" height="15.40" viewBox="0 0 16 16"><path d="M1 3.4c0-1 1-1.6 2-1.6h4.4l1.6 1.8v4.6h-8z" fill="#f5d27c"/><rect x="9.6" y="0" width="6.2" height="8" fill="#e8f0ff"/><path d="M11 0.6v5.2M14.4 0.6v4.6c0 1.4-1 1.8-2.2 1.6" fill="none" stroke="#3a6fc4" stroke-width="1.5"/><path d="M0.6 8.2h15l-2.8 6.6h-12.2z" fill="url(#gb)"/><path d="M3 8.8l3 6.4h-6z" fill="#f6c04a"/></svg>
<span style='top:589.63px;font-size:11.8px;line-height:16px;color:#c9cdd2;left:39.00px;transform:scaleX(0.864);'>PA_3_2024_a2233336110</span>
<svg style="left:8.10px;top:610.86px;" width="6.00" height="10.00" viewBox="0 0 6 10"><path d="M1.2 1 L4.8 5 L1.2 9" fill="none" stroke="#7c7c7c" stroke-width="2"/></svg>
<svg style="left:19.20px;top:607.86px;overflow:visible;" width="15.40" height="15.40" viewBox="0 0 16 16"><path d="M1.600 3.400c0-1.400 1-2.600 2.400-2.600h3.600l1.400 1.800h5v3.600h-12.400z" fill="#f6dc8c"/><path d="M1 4.400l-.4 7.800 2.400-5.400z" fill="#f3cf70"/><path d="M2.800 6.400h13l-3.600 6.200h-11.600z" fill="url(#gb)"/></svg>
<span style='top:606.96px;font-size:11.8px;line-height:16px;color:#c9cdd2;left:39.00px;transform:scaleX(0.871);'>Servers</span>
<svg style="left:0.90px;top:7.40px;" width="2.00" height="13.00" viewBox="0 0 2 13"><rect x="0.1" y="0" width="1.8" height="1.9" fill="#b9b9b9"/><rect x="0.1" y="3.6" width="1.8" height="1.9" fill="#b9b9b9"/><rect x="0.1" y="7.4" width="1.8" height="1.9" fill="#b9b9b9"/><rect x="0.1" y="11" width="1.8" height="1.9" fill="#b9b9b9"/></svg>
<svg style="left:8.60px;top:5.80px;overflow:visible;" width="15.40" height="15.40" viewBox="0 0 16 16"><rect x="0.8" y="2.8" width="13.6" height="12" fill="#f1f8ff"/><rect x="0.8" y="2.8" width="13.6" height="2.6" fill="#3b7cc4"/><path d="M5 15.4c5 0 8-3 8.6-7" fill="none" stroke="#f3d98a" stroke-width="1.2"/><path d="M12 0.6l1.4 2.6 2.2 1.2-2.2 1.4-1.4 3.400-1.400-3.400-2.200-1.400 2.200-1.200z" fill="#d9a820" stroke="#a87c10" stroke-width="0.500"/><path d="M12 0.6m0 0.800v6" stroke="#fff6cc" stroke-width="1.300"/></svg>
<svg style="left:30.50px;top:11.00px;" width="7.40" height="4.40" viewBox="0 0 7.4 4.4"><path d="M0 0h7.4l-3.7 4.2z" fill="#1e1e1e"/></svg>
<svg style="left:45.30px;top:5.80px;overflow:visible;" width="15.40" height="15.40" viewBox="0 0 16 16"><rect x="0.8" y="2.8" width="13.6" height="12" fill="#f1f8ff"/><rect x="0.8" y="2.8" width="13.6" height="2.6" fill="#3b7cc4"/><rect x="4" y="5.4" width="1.4" height="9.4" fill="#6d8fc9"/><rect x="7" y="8" width="6" height="2" fill="#5a78b8"/><rect x="7" y="12" width="2.4" height="1.4" fill="#5a78b8"/><rect x="10.6" y="12" width="2.4" height="1.4" fill="#5a78b8"/><path d="M12 0.6l1.4 2.6 2.2 1.2-2.2 1.4-1.4 3.400-1.400-3.400-2.200-1.400 2.200-1.200z" fill="#d9a820" stroke="#a87c10" stroke-width="0.500"/><path d="M12 0.6m0 0.800v6" stroke="#fff6cc" stroke-width="1.300"/></svg>
<svg style="left:66.70px;top:11.20px;" width="6.40" height="2.80" viewBox="0 0 6.4 2.8"><rect width="6.4" height="2.7" fill="#1c1c1c"/></svg>
<svg style="left:81.20px;top:5.80px;overflow:visible;" width="15.40" height="15.40" viewBox="0 0 16 16"><rect x="0.6" y="1.4" width="14" height="14" rx="1" fill="#e4e4e4"/><rect x="3.6" y="1.4" width="8" height="5.6" fill="#cfcfcf"/><rect x="4.6" y="9.6" width="6" height="6" fill="#d2d2d2"/><path d="M5 10.4h5.2M7.6 10.4v4" stroke="#b4b4b4" stroke-width="1.2"/></svg>
<svg style="left:103.60px;top:5.80px;overflow:visible;" width="15.40" height="15.40" viewBox="0 0 16 16"><path d="M0.6 1h9l4 3.6v10.6h-9.6l-3.4-3.4z" fill="#d4d4d4"/><rect x="4" y="5" width="10.4" height="10.6" rx="1" fill="#e6e6e6"/><rect x="6.6" y="9.8" width="5.4" height="5.6" fill="#cfcfcf"/><path d="M6.6 8h5.4" stroke="#c2c2c2" stroke-width="1.2"/></svg>
<svg style="left:122.00px;top:7.40px;" width="2.00" height="13.00" viewBox="0 0 2 13"><rect x="0.1" y="0" width="1.8" height="1.9" fill="#b9b9b9"/><rect x="0.1" y="3.6" width="1.8" height="1.9" fill="#b9b9b9"/><rect x="0.1" y="7.4" width="1.8" height="1.9" fill="#b9b9b9"/><rect x="0.1" y="11" width="1.8" height="1.9" fill="#b9b9b9"/></svg>
<svg style="left:130.40px;top:5.80px;overflow:visible;" width="15.40" height="15.40" viewBox="0 0 16 16"><path d="M0.8 8.6l6.6-5.2v3c3 .2 5-1.6 5.6-5.6 2.2 5.6 0 10-5.6 10.4v3z" fill="url(#gy)" stroke="#b47a0c" stroke-width="1.2" stroke-linejoin="round"/></svg>
<svg style="left:151.20px;top:5.80px;overflow:visible;" width="15.40" height="15.40" viewBox="0 0 16 16"><path d="M15.2 8.6l-6.6-5.2v3c-3 .2-5-1.6-5.6-5.6-2.2 5.6 0 10 5.6 10.4v3z" fill="#ececec" stroke="#d0d0d0" stroke-width="0.8" stroke-linejoin="round"/></svg>
<svg style="left:171.60px;top:7.40px;" width="2.00" height="13.00" viewBox="0 0 2 13"><rect x="0.1" y="0" width="1.8" height="1.9" fill="#b9b9b9"/><rect x="0.1" y="3.6" width="1.8" height="1.9" fill="#b9b9b9"/><rect x="0.1" y="7.4" width="1.8" height="1.9" fill="#b9b9b9"/><rect x="0.1" y="11" width="1.8" height="1.9" fill="#b9b9b9"/></svg>
<svg style="left:179.20px;top:5.80px;overflow:visible;" width="15.40" height="15.40" viewBox="0 0 16 16"><rect x="1" y="1.6" width="13.6" height="10.4" fill="#2f62b4"/><rect x="2.8" y="3.2" width="10" height="7.2" fill="#f4f7ff"/><path d="M4 5.4h6M4 8h8.4" stroke="#3a64b4" stroke-width="1.2"/><path d="M5.6 13h4.6M3 15h10" stroke="#2f62b4" stroke-width="1.6"/></svg>
<svg style="left:198.40px;top:7.40px;" width="2.00" height="13.00" viewBox="0 0 2 13"><rect x="0.1" y="0" width="1.8" height="1.9" fill="#b9b9b9"/><rect x="0.1" y="3.6" width="1.8" height="1.9" fill="#b9b9b9"/><rect x="0.1" y="7.4" width="1.8" height="1.9" fill="#b9b9b9"/><rect x="0.1" y="11" width="1.8" height="1.9" fill="#b9b9b9"/></svg>
<svg style="left:206.40px;top:5.80px;overflow:visible;" width="15.40" height="15.40" viewBox="0 0 16 16"><path d="M2.4 3.4l11.6 9.6M3 4v9h10" stroke="#8d9398" stroke-width="1.6" fill="none" opacity="0.8"/><circle cx="8" cy="8.4" r="4.4" fill="#1d7fbe"/><path d="M6 7c1-1.6 3-1.8 4-.4" stroke="#bfe3f7" stroke-width="1.6" fill="none"/></svg>
<svg style="left:225.00px;top:7.40px;" width="2.00" height="13.00" viewBox="0 0 2 13"><rect x="0.1" y="0" width="1.8" height="1.9" fill="#b9b9b9"/><rect x="0.1" y="3.6" width="1.8" height="1.9" fill="#b9b9b9"/><rect x="0.1" y="7.4" width="1.8" height="1.9" fill="#b9b9b9"/><rect x="0.1" y="11" width="1.8" height="1.9" fill="#b9b9b9"/></svg>
<svg style="left:232.00px;top:5.80px;overflow:visible;" width="15.40" height="15.40" viewBox="0 0 16 16"><path d="M0.6 6.8l4-1 1.2-3.4 1.6 3.4 3 .6-2.6 2.2.2 3.6-2.6-1.6-3 1.6.6-3.4z" fill="#bcc7ee"/><rect x="3.6" y="4" width="3.4" height="3" fill="#e8c8d0"/><path d="M6.6 9.6h4.2l-1 5.4h-3.2z" fill="#1a1a1a"/><circle cx="11" cy="5.4" r="4.6" fill="#1f8d34"/><path d="M12.8 3.8c-1.6-1.2-3.8-.2-3.8 1.7s2.200 2.900 3.800 1.700" fill="none" stroke="#fff" stroke-width="1.5"/></svg>
<div style="left:250.90px;top:2.80px;width:22.9px;height:20.2px;background:#cce8ff;border:0.8px solid #a3d4fb;border-radius:2.5px;box-sizing:border-box;"></div>
<svg style="left:254.60px;top:5.80px;overflow:visible;" width="15.40" height="15.40" viewBox="0 0 16 16"><path d="M9.6 9.400l5.200-7.400 1.600 1 -0.400 8.200 -2.200 1.600z" fill="#948c6e"/><path d="M4.6 14.6c0-2.600 2.400-5.600 5.400-5.800l3.600 2.600c-0.800 3.400-3.400 5.400-6.600 5.200-1.400 0-2.400-1-2.400-2z" fill="#f3d431"/><path d="M6 14.200c1.400-.4 3.400-1.800 4.400-3.600" stroke="#fbee8a" stroke-width="1.2" fill="none"/></svg>
<svg style="left:277.20px;top:5.80px;overflow:visible;" width="15.40" height="15.40" viewBox="0 0 16 16"><circle cx="5.6" cy="5.4" r="4.6" fill="#f2f2f2"/><circle cx="5.6" cy="5.400" r="2" fill="#a8a8a8"/><path d="M8 3.4h6v7h-6z" fill="#ededed"/><path d="M10 4.800c-1.600.8-1.600 3.200 0 4M12.600 4.400v5" stroke="#8e8e8e" stroke-width="1.2" fill="none"/><path d="M2 10.600h11.600v2.400h-11.600z" fill="#e2e2e2"/><path d="M2 14.800h7.400" stroke="#cfcfcf" stroke-width="1.600"/></svg>
<svg style="left:298.40px;top:5.80px;overflow:visible;" width="15.40" height="15.40" viewBox="0 0 16 16"><rect x="0.900" y="0.400" width="10.400" height="13.800" fill="none" stroke="#a99d72" stroke-width="1.300"/><path d="M3.200 4.400h5.600M3.200 6.600h3M3.200 9.200h2" stroke="#6d8fd0" stroke-width="1.600"/><path d="M14.400 2.400v7.600h-5" fill="none" stroke="#c58a12" stroke-width="3.200"/><path d="M14.400 2.800v7.200h-5" fill="none" stroke="#fff3c4" stroke-width="1.400"/><path d="M10.200 6.400l-4.200 3.600 4.200 3.600z" fill="#f7d56a" stroke="#c58a12" stroke-width="0.800"/></svg>
<svg style="left:321.20px;top:5.80px;overflow:visible;" width="15.40" height="15.40" viewBox="0 0 16 16"><path d="M0.900 1.400v14h13.600v-14" fill="none" stroke="#a99d72" stroke-width="1.300"/><path d="M2.600 4.600h1.400M2.600 8.400h1.400M2.600 12.200h1.400" stroke="#5d83c8" stroke-width="1.600"/><path d="M6 4h5.400v4.400h-5.400M6 8.400h5.400v4.200h-5.400" fill="none" stroke="#6d8fd0" stroke-width="1.600"/></svg>
<div style="left:339.80px;top:2.80px;width:22.7px;height:20.2px;background:#cce8ff;border:0.8px solid #a3d4fb;border-radius:2.5px;box-sizing:border-box;"></div>
<span style='top:6.60px;font-size:14.5px;line-height:16px;color:#6c88ad;left:347.40px;font-weight:bold;'>¶</span>
<svg style="left:362.90px;top:7.40px;" width="2.00" height="13.00" viewBox="0 0 2 13"><rect x="0.1" y="0" width="1.8" height="1.9" fill="#d9d0c6"/><rect x="0.1" y="3.6" width="1.8" height="1.9" fill="#d9d0c6"/><rect x="0.1" y="7.4" width="1.8" height="1.9" fill="#d9d0c6"/><rect x="0.1" y="11" width="1.8" height="1.9" fill="#d9d0c6"/></svg>
<svg style="left:370.80px;top:5.80px;overflow:visible;" width="15.40" height="15.40" viewBox="0 0 16 16"><path d="M4.400 1.200v3M8.400 1.200v3M1 4.800h3M1.600 8.400l2.400 .6M3.400 13.400l1.600-1.400M12.400 6l2-1M13 10.400l2.400 1.400M9.600 14.400l.8 1.600M5.600 14.400l-.6 1.600" stroke="#3fa48c" stroke-width="1.300"/><ellipse cx="8" cy="9" rx="4.400" ry="5" transform="rotate(-35 8 9)" fill="#2488b0"/><path d="M5.400 6.400l3.400 .400 .4 3z" fill="#fff"/><rect x="7.600" y="8.600" width="3.400" height="3.200" fill="#9fd45c"/></svg>
<svg style="left:391.80px;top:11.00px;" width="7.40" height="4.40" viewBox="0 0 7.4 4.4"><path d="M0 0h7.4l-3.7 4.2z" fill="#1e1e1e"/></svg>
<svg style="left:407.20px;top:5.80px;overflow:visible;" width="15.40" height="15.40" viewBox="0 0 16 16"><circle cx="7.8" cy="7.9" r="7.2" fill="url(#gg)" stroke="#238a2c" stroke-width="0.6"/><path d="M5.62 3.94l5.94 3.96l-5.94 3.96z" fill="#fff"/></svg>
<svg style="left:428.70px;top:11.00px;" width="7.40" height="4.40" viewBox="0 0 7.4 4.4"><path d="M0 0h7.4l-3.7 4.2z" fill="#1e1e1e"/></svg>
<svg style="left:442.60px;top:5.80px;overflow:visible;" width="15.40" height="15.40" viewBox="0 0 16 16"><circle cx="6" cy="5.4" r="5.6" fill="url(#gg)" stroke="#238a2c" stroke-width="0.6"/><path d="M4.31 2.32l4.62 3.08l-4.62 3.08z" fill="#fff"/><rect x="6.200" y="8.600" width="10" height="6.200" rx="0.800" fill="#0c0c0c"/><circle cx="8.800" cy="11.700" r="1.600" fill="#2fdc36"/><rect x="11" y="10.200" width="4" height="3" fill="#e31b1b"/></svg>
<svg style="left:465.40px;top:11.00px;" width="7.40" height="4.40" viewBox="0 0 7.4 4.4"><path d="M0 0h7.4l-3.7 4.2z" fill="#1e1e1e"/></svg>
<svg style="left:479.40px;top:5.80px;overflow:visible;" width="15.40" height="15.40" viewBox="0 0 16 16"><circle cx="6" cy="5.4" r="5.6" fill="url(#gg)" stroke="#238a2c" stroke-width="0.6"/><path d="M4.31 2.32l4.62 3.08l-4.62 3.08z" fill="#fff"/><path d="M7.400 10.400h9.400v5.200h-9.400z" fill="#e1242a"/><path d="M9.600 10.400v-1.600h5v1.600" fill="none" stroke="#e1242a" stroke-width="1.400"/><path d="M7.400 12.600h9.400" stroke="#f58a8a" stroke-width="0.800"/></svg>
<svg style="left:502.00px;top:11.00px;" width="7.40" height="4.40" viewBox="0 0 7.4 4.4"><path d="M0 0h7.4l-3.7 4.2z" fill="#1e1e1e"/></svg>
<svg style="left:513.40px;top:7.40px;" width="2.00" height="13.00" viewBox="0 0 2 13"><rect x="0.1" y="0" width="1.8" height="1.9" fill="#c9c9c9"/><rect x="0.1" y="3.6" width="1.8" height="1.9" fill="#c9c9c9"/><rect x="0.1" y="7.4" width="1.8" height="1.9" fill="#c9c9c9"/><rect x="0.1" y="11" width="1.8" height="1.9" fill="#c9c9c9"/></svg>
<svg style="left:521.40px;top:5.80px;overflow:visible;" width="15.40" height="15.40" viewBox="0 0 16 16"><rect x="0.800" y="2.800" width="11.400" height="12" fill="#b9683c"/><rect x="2.200" y="4.600" width="3.600" height="3.600" fill="#efd29a"/><rect x="7.200" y="4.600" width="3.600" height="3.600" fill="#efd29a"/><rect x="2.200" y="9.800" width="3.600" height="3.600" fill="#efd29a"/><rect x="7.200" y="9.800" width="3.600" height="3.600" fill="#efd29a"/><path d="M11.6 0.4l1.4 2.6 2.2 1.2-2.2 1.4-1.4 3.400-1.400-3.400-2.200-1.400 2.200-1.200z" fill="#d9a820" stroke="#a87c10" stroke-width="0.500"/><path d="M11.6 0.4m0 0.800v6" stroke="#fff6cc" stroke-width="1.300"/></svg>
<svg style="left:545.00px;top:5.80px;overflow:visible;" width="15.40" height="15.40" viewBox="0 0 16 16"><circle cx="6.600" cy="8.400" r="6" fill="#1f9636"/><path d="M9 6.200c-2.200-1.600-5-.2-5 2.200s2.800 3.800 5 2.200" fill="none" stroke="#fff" stroke-width="2"/><path d="M11.4 0.4l1.4 2.6 2.2 1.2-2.2 1.4-1.4 3.400-1.400-3.400-2.200-1.400 2.200-1.200z" fill="#d9a820" stroke="#a87c10" stroke-width="0.500"/><path d="M11.4 0.4m0 0.800v6" stroke="#fff6cc" stroke-width="1.300"/></svg>
<svg style="left:565.60px;top:11.00px;" width="7.40" height="4.40" viewBox="0 0 7.4 4.4"><path d="M0 0h7.4l-3.7 4.2z" fill="#1e1e1e"/></svg>
<svg style="left:576.80px;top:7.40px;" width="2.00" height="13.00" viewBox="0 0 2 13"><rect x="0.1" y="0" width="1.8" height="1.9" fill="#b9b9b9"/><rect x="0.1" y="3.6" width="1.8" height="1.9" fill="#b9b9b9"/><rect x="0.1" y="7.4" width="1.8" height="1.9" fill="#b9b9b9"/><rect x="0.1" y="11" width="1.8" height="1.9" fill="#b9b9b9"/></svg>
<svg style="left:583.60px;top:5.80px;overflow:visible;" width="15.40" height="15.40" viewBox="0 0 16 16"><path d="M0.600 7.600l2.400-3h5l1.200 1.600h5.600v2" fill="#fbe9b0"/><path d="M0.600 14.800v-7.200h14.200l-2.800 7.200z" fill="url(#gf)" stroke="#c98b22" stroke-width="0.700"/><circle cx="7.400" cy="4.800" r="3.400" fill="#7a57c6"/><circle cx="12.600" cy="6.200" r="3.300" fill="#2a9a48"/><path d="M6.200 3.600h2.400M11.400 5.600h2.600" stroke="#cfc0f0" stroke-width="1"/></svg>
<svg style="left:605.80px;top:5.80px;overflow:visible;" width="15.40" height="15.40" viewBox="0 0 16 16"><path d="M0.600 7.600l2.400-3h5l1.200 1.600h5.600v2" fill="#fbe9b0"/><path d="M6.600 8.400v-5l3-2.400 3 2.400v5z" fill="#e4ebfb" stroke="#9fb0dc" stroke-width="0.800"/><path d="M0.600 14.800v-6.400h15l-3.600 6.400z" fill="url(#gf)" stroke="#c98b22" stroke-width="0.700"/></svg>
<svg style="left:628.40px;top:5.80px;overflow:visible;" width="15.40" height="15.40" viewBox="0 0 16 16"><path d="M10.400 0.800l6 2.200-8.400 9.600-4.800-2.800z" fill="#f6c960" stroke="#c58a12" stroke-width="0.800"/><path d="M6.600 6.800l4.600 2.600-2 2.400-4.800-2.800z" fill="#b9b4c6"/><path d="M3.200 9.800l4.800 2.800-3.400 3.400-4.400.2z" fill="#fffdf0"/><path d="M11.400 2l3.200 1.400" stroke="#fff3c4" stroke-width="1.200"/></svg>
<svg style="left:651.70px;top:11.20px;" width="6.40" height="2.80" viewBox="0 0 6.4 2.8"><rect width="6.4" height="2.7" fill="#1c1c1c"/></svg>
<svg style="left:663.00px;top:7.40px;" width="2.00" height="13.00" viewBox="0 0 2 13"><rect x="0.1" y="0" width="1.8" height="1.9" fill="#b7b09c"/><rect x="0.1" y="3.6" width="1.8" height="1.9" fill="#b7b09c"/><rect x="0.1" y="7.4" width="1.8" height="1.9" fill="#b7b09c"/><rect x="0.1" y="11" width="1.8" height="1.9" fill="#b7b09c"/></svg>
<svg style="left:670.40px;top:5.80px;overflow:visible;" width="15.40" height="15.40" viewBox="0 0 16 16"><path d="M9.600 3.600h3.600v6.800h-3" fill="none" stroke="#c9cfe6" stroke-width="1.500"/><path d="M0.800 12.200v3.800" stroke="#8ea0c4" stroke-width="1.400"/><rect x="3.800" y="12.600" width="2.800" height="2.600" fill="#2f70b8"/><path d="M8.600 13.900h4.400" stroke="#c9cfe6" stroke-width="1.600"/><path d="M3.200 0.600h4v5.600h3l-5 5.400-5-5.400h3z" fill="url(#gy)" stroke="#c0820c" stroke-width="1.300" stroke-linejoin="round"/></svg>
<svg style="left:692.60px;top:11.00px;" width="7.40" height="4.40" viewBox="0 0 7.4 4.4"><path d="M0 0h7.4l-3.7 4.2z" fill="#1e1e1e"/></svg>
<svg style="left:707.60px;top:5.80px;overflow:visible;" width="15.40" height="15.40" viewBox="0 0 16 16"><rect x="0.400" y="0" width="2" height="4.600" fill="#c7bf86"/><path d="M3.800 2.200h9" stroke="#8ea6d4" stroke-width="1.800"/><path d="M10 6.600h3.400M10.400 10.400h3" stroke="#d3d8ea" stroke-width="1.800"/><path d="M2.800 16v-6h-2.400l4.200-5.600 4.200 5.600h-2.400v6z" fill="url(#gy)" stroke="#c0820c" stroke-width="1.300" stroke-linejoin="round"/></svg>
<svg style="left:729.20px;top:11.20px;" width="6.40" height="2.80" viewBox="0 0 6.4 2.8"><rect width="6.4" height="2.7" fill="#1c1c1c"/></svg>
<svg style="left:741.80px;top:5.60px;overflow:visible;" width="15.40" height="15.40" viewBox="0 0 16 16"><path d="M1 8l6.4-6v3.6h7.6v4.8h-7.6v3.6z" fill="url(#gy)" stroke="#b47a0c" stroke-width="1.3" stroke-linejoin="round"/><path d="M3.4 3.6m-3 -3l6 6m0-6l-6 6m3-7v8m-4-4h8" stroke="#9fb0c8" stroke-width="1.3"/><circle cx="3.4" cy="3.6" r="1.4" fill="#4f74b0"/></svg>
<svg style="left:764.80px;top:5.60px;overflow:visible;" width="15.40" height="15.40" viewBox="0 0 16 16"><path d="M15 8l-6.4-6v3.6h-7.6v4.8h7.6v3.6z" fill="url(#gy)" stroke="#b47a0c" stroke-width="1.3" stroke-linejoin="round"/><path d="M12.8 3.6m-3 -3l6 6m0-6l-6 6m3-7v8m-4-4h8" stroke="#9fb0c8" stroke-width="1.3"/><circle cx="12.8" cy="3.6" r="1.4" fill="#4f74b0"/></svg>
<svg style="left:787.60px;top:5.60px;overflow:visible;" width="15.40" height="15.40" viewBox="0 0 16 16"><path d="M1 8l6.4-6v3.6h7.6v4.8h-7.6v3.6z" fill="url(#gy)" stroke="#b47a0c" stroke-width="1.3" stroke-linejoin="round"/></svg>
<svg style="left:809.80px;top:11.00px;" width="7.40" height="4.40" viewBox="0 0 7.4 4.4"><path d="M0 0h7.4l-3.7 4.2z" fill="#1e1e1e"/></svg>
<svg style="left:824.40px;top:5.60px;overflow:visible;" width="15.40" height="15.40" viewBox="0 0 16 16"><path d="M15 8l-6.4-6v3.6h-7.6v4.8h7.6v3.6z" fill="#f2f2f2" stroke="#f2f2f2" stroke-width="1.3" stroke-linejoin="round"/></svg>
<svg style="left:846.20px;top:11.40px;" width="6.20" height="2.60" viewBox="0 0 6.2 2.6"><rect width="6.200" height="2.400" fill="#9a9ea0"/></svg>
<div style="left:859.20px;top:4.00px;width:1.60px;height:18.80px;background:#8d9294;"></div>
<svg style="left:7.60px;top:33.80px;" width="9.80" height="13.00" viewBox="0 0 9.8 13"><path d="M1.200 0v13M1.200 3.600h3M1.200 9.800h3" stroke="#6f7e9e" stroke-width="1.800" fill="none"/><rect x="4.600" y="1" width="5" height="4.800" fill="#d9832c"/><rect x="4.600" y="7.400" width="5" height="4.800" fill="#d9832c"/><path d="M4.600 3.400h5M4.600 9.800h5" stroke="#f0b070" stroke-width="0.800"/></svg>
<svg style="left:117.80px;top:35.90px;" width="10.40" height="10.00" viewBox="0 0 10.4 10"><path d="M1 1l8.400 8M9.400 1l-8.400 8" stroke="#e4e4e4" stroke-width="1.500" stroke-dasharray="1.700 1.300"/></svg>
<svg style="left:711.70px;top:35.90px;" width="10.40" height="10.00" viewBox="0 0 10.4 10"><path d="M1 1l8.400 8M9.400 1l-8.400 8" stroke="#e4e4e4" stroke-width="1.500" stroke-dasharray="1.700 1.300"/></svg>
<svg style="left:237.80px;top:33.60px;" width="13.40" height="13.40" viewBox="0 0 13.4 13.4"><rect x="0.600" y="0.600" width="9.400" height="9.600" fill="#d5ebf2" stroke="#a9b4cf" stroke-width="0.900"/><rect x="3" y="3" width="9.800" height="9.800" fill="#e2f4f4" stroke="#8e9ac0" stroke-width="1"/><path d="M5 6.600h5.600" stroke="#b0c8e8" stroke-width="1.400"/></svg>
<svg style="left:258.00px;top:32.40px;" width="14.60" height="14.60" viewBox="0 0 14.6 14.6"><path d="M0.800 4.200l4-3.600v2.200h6.200v3h-6.200v2.200z" fill="#fff8dc" stroke="#c58a12" stroke-width="1.100" stroke-linejoin="round"/><path d="M14 10.600l-4-3.600v2.200h-5.600v3h5.600v2.200z" fill="#fff3c0" stroke="#c58a12" stroke-width="1.100" stroke-linejoin="round"/></svg>
<svg style="left:289.80px;top:33.60px;" width="12.60" height="13.40" viewBox="0 0 12.6 13.4"><path d="M1 2.400c1.600-2.400 3.800-1.600 4.200.6l2-1.400 4.800.8v6.400l-3.600-.6v4.600h-5.600v-4.200c-1.600-.6-2.400-4.400-1.800-6.200z" fill="#dcdcdc"/><circle cx="4.800" cy="9.400" r="2.200" fill="#b8b8b8"/><path d="M8 3.600v4.800" stroke="#bdbdbd" stroke-width="1"/></svg>
<svg style="left:316.60px;top:34.00px;" width="3.60" height="12.40" viewBox="0 0 3.6 12.4"><rect x="0.600" y="0.400" width="2.200" height="2.200" fill="#e0e0e0"/><rect x="0.600" y="5" width="2.200" height="2.200" fill="#e0e0e0"/><rect x="0.600" y="9.800" width="2.200" height="2.200" fill="#e0e0e0"/></svg>
<svg style="left:356.20px;top:35.00px;" width="11.00" height="9.20" viewBox="0 0 11 9.2"><path d="M1 0v9.200M10 0v9.200M1 3.400h9" fill="none" stroke="#cdcdcd" stroke-width="1.150"/></svg>
<svg style="left:386.00px;top:32.60px;overflow:visible;" width="15.40" height="15.40" viewBox="0 0 16 16"><path d="M3.2 1.6h6.6l3.4 3.4v10h-10z" fill="url(#gp)" stroke="#d5a327" stroke-width="1.1" stroke-linejoin="round"/><path d="M9 4.6v5.6c0 1.4-.8 2-1.9 2-.8 0-1.4-.3-1.8-1" fill="none" stroke="#2e6cb6" stroke-width="1.9"/></svg>
<svg style="left:491.90px;top:32.60px;overflow:visible;" width="15.40" height="15.40" viewBox="0 0 16 16"><path d="M3.2 1.6h6.6l3.4 3.4v10h-10z" fill="url(#gp)" stroke="#d5a327" stroke-width="1.1" stroke-linejoin="round"/><path d="M9 4.6v5.6c0 1.4-.8 2-1.9 2-.8 0-1.4-.3-1.8-1" fill="none" stroke="#2e6cb6" stroke-width="1.9"/><ellipse cx="3.300" cy="12.400" rx="3.400" ry="3.500" fill="#f3b23e"/><path d="M1.400 10.800c.8-1.400 3-1.400 3.800 0" fill="none" stroke="#fff4d8" stroke-width="1"/><rect x="2.500" y="11.600" width="1.600" height="2.200" fill="#8a5a12"/></svg>
<svg style="left:609.00px;top:32.60px;overflow:visible;" width="15.40" height="15.40" viewBox="0 0 16 16"><path d="M3.2 1.6h6.6l3.4 3.4v10h-10z" fill="url(#gp)" stroke="#d5a327" stroke-width="1.1" stroke-linejoin="round"/><path d="M9 4.6v5.6c0 1.4-.8 2-1.9 2-.8 0-1.4-.3-1.8-1" fill="none" stroke="#2e6cb6" stroke-width="1.9"/></svg>
<svg style="left:730.80px;top:32.60px;overflow:visible;" width="15.40" height="15.40" viewBox="0 0 16 16"><path d="M3.2 1.6h6.6l3.4 3.4v10h-10z" fill="url(#gp)" stroke="#d5a327" stroke-width="1.1" stroke-linejoin="round"/><path d="M9 4.6v5.6c0 1.4-.8 2-1.9 2-.8 0-1.4-.3-1.8-1" fill="none" stroke="#2e6cb6" stroke-width="1.9"/><rect x="-0.200" y="8.400" width="7.600" height="8" fill="#e0364a"/><rect x="2.600" y="11.400" width="2.200" height="2.200" fill="#fff"/></svg>
<svg style="left:859.20px;top:32.60px;overflow:visible;" width="15.40" height="15.40" viewBox="0 0 16 16"><path d="M3.2 1.6h6.6l3.4 3.4v10h-10z" fill="url(#gp)" stroke="#d5a327" stroke-width="1.1" stroke-linejoin="round"/><path d="M9 4.6v5.6c0 1.4-.8 2-1.9 2-.8 0-1.4-.3-1.8-1" fill="none" stroke="#2e6cb6" stroke-width="1.9"/><ellipse cx="3.300" cy="12.400" rx="3.400" ry="3.500" fill="#f3b23e"/><path d="M1.400 10.800c.8-1.400 3-1.400 3.800 0" fill="none" stroke="#fff4d8" stroke-width="1"/><rect x="2.500" y="11.600" width="1.600" height="2.200" fill="#8a5a12"/></svg>
<div style="left:418.60px;top:358.00px;width:447.40px;height:12.00px;background:#373737;"></div>
<svg style="left:382.40px;top:341.00px;" width="11.00" height="44.60" viewBox="0 0 11 44.6"><defs><pattern id="chk" width="3.6" height="3.6" patternUnits="userSpaceOnUse"><rect width="3.6" height="3.6" fill="#14465a"/><rect width="1.8" height="1.8" fill="#2291b4"/><rect x="1.8" y="1.8" width="1.8" height="1.8" fill="#2291b4"/></pattern></defs><rect width="11" height="44.6" fill="url(#chk)"/></svg>
<div style="left:416.00px;top:816.00px;width:450.00px;height:16.50px;background:#171717;"></div>
<svg style="left:420.80px;top:819.60px;" width="7.40" height="10.00" viewBox="0 0 7.4 10"><path d="M7 0.4 L0.4 5 L7 9.600 Z" fill="#5e5e5e"/></svg>
<div id="code">
<div class="ln" style="top:54.80px">1</div>
<div style="top:54.80px"><span class="k">package</span><span class="w">·</span>controller<span class="o">;</span><span class="w">¤</span><span class="pm">¶</span></div>
<div class="ln" style="top:69.20px">2</div>
<div style="top:69.20px"><span class="w">¤</span><span class="pm">¶</span></div>
<div class="ln" style="top:83.60px">3</div>
<i class="fo" style="top:86.10px"></i>
<div style="top:83.60px"><span class="k">import</span><span class="w">·</span>java.io.File<span class="o">;</span><span class="w">¤</span><span class="pm">¶</span></div>
<div class="ln" style="top:98.00px">4</div>
<div style="top:98.00px"><span class="k">import</span><span class="w">·</span>java.io.IOException<span class="o">;</span><span class="w">¤</span><span class="pm">¶</span></div>
<div class="ln" style="top:112.40px">5</div>
<div style="top:112.40px"><span class="k">import</span><span class="w">·</span>java.util.List<span class="o">;</span><span class="w">¤</span><span class="pm">¶</span></div>
<div class="ln" style="top:126.80px">6</div>
<div style="top:126.80px"><span class="w">¤</span><span class="pm">¶</span></div>
<div class="ln" style="top:141.20px">7</div>
<div style="top:141.20px"><span class="k">import</span><span class="w">·</span>gui.FormEvent<span class="o">;</span><span class="w">¤</span><span class="pm">¶</span></div>
<div class="ln" style="top:155.60px">8</div>
<div style="top:155.60px"><span class="k">import</span><span class="w">·</span>model.AgeCategory<span class="o">;</span><span class="w">¤</span><span class="pm">¶</span></div>
<div class="ln" style="top:170.00px">9</div>
<div style="top:170.00px"><span class="k">import</span><span class="w">·</span>model.Database<span class="o">;</span><span class="w">¤</span><span class="pm">¶</span></div>
<div class="ln" style="top:184.40px">10</div>
<div style="top:184.40px"><span class="k">import</span><span class="w">·</span>model.EmploymentCategory<span class="o">;</span><span class="w">¤</span><span class="pm">¶</span></div>
<div class="ln" style="top:198.80px">11</div>
<div style="top:198.80px"><span class="k">import</span><span class="w">·</span>model.Gender<span class="o">;</span><span class="w">¤</span><span class="pm">¶</span></div>
<div class="ln" style="top:213.20px">12</div>
<div style="top:213.20px"><span class="k">import</span><span class="w">·</span>model.Person<span class="o">;</span><span class="w">¤</span><span class="pm">¶</span></div>
<div class="ln" style="top:227.60px">13</div>
<div style="top:227.60px"><span class="w">¤</span><span class="pm">¶</span></div>
<div class="ln" style="top:242.00px">14</div>
<div style="top:242.00px"><span class="k">public</span><span class="w">·</span><span class="k">class</span><span class="w">·</span><span class="c">Controller</span><span class="w">·</span><span class="b">{</span><span class="w">¤</span><span class="pm">¶</span></div>
<div class="ln" style="top:256.40px">15</div>
<div style="top:256.40px"><span class="w">»   </span><span class="c">Database</span><span class="w">·</span><span class="f">db</span><span class="o">=</span><span class="k">new</span><span class="w">·</span><span class="mi">Database</span><span class="b">()</span><span class="o">;</span><span class="w">¤</span><span class="pm">¶</span></div>
<div class="ln" style="top:270.80px">16</div>
<div style="top:270.80px"><span class="w">»   </span><span class="w">¤</span><span class="pm">¶</span></div>
<div class="ln" style="top:285.20px">17</div>
<i class="fo" style="top:287.70px"></i>
<div style="top:285.20px"><span class="w">»   </span><span class="k">public</span><span class="w">·</span><span class="i">List</span><span class="b">&lt;</span><span class="ta">Person</span><span class="b">&gt;</span><span class="w">·</span><span class="md">getPeople</span><span class="b">(){</span><span class="w">¤</span><span class="pm">¶</span></div>
<div class="ln" style="top:299.60px">18</div>
<div style="top:299.60px"><span class="w">»   »   </span><span class="k">return</span><span class="w">·</span><span class="f">db</span><span class="o">.</span><span class="mi">getPeople</span><span class="b">()</span><span class="o">;</span><span class="w">¤</span><span class="pm">¶</span></div>
<div class="ln" style="top:314.00px">19</div>
<div style="top:314.00px"><span class="w">»   </span><span class="b">}</span><span class="w">¤</span><span class="pm">¶</span></div>
<div class="ln" style="top:328.40px">20</div>
<div style="top:328.40px"><span class="w">»   </span><span class="w">¤</span><span class="pm">¶</span></div>
<div class="ln" style="top:342.80px">21</div>
<i class="fo" style="top:345.30px"></i>
<div style="top:342.80px"><span class="w">»   </span><span class="k">public</span><span class="w">·</span><span class="k">void</span><span class="w">·</span><span class="md">removePerson</span><span class="b">(</span><span class="k">int</span><span class="w">·</span><span class="p">index</span><span class="b">)</span><span class="w">·</span><span class="b">{</span><span class="w">¤</span><span class="pm">¶</span></div>
<div class="ln" style="top:357.20px">22</div>
<div style="top:357.20px"><span class="w">»   »   </span><span class="f">db</span><span class="o">.</span><span class="mi">removePerson</span><span class="b">(</span><span class="p">index</span><span class="b">)</span><span class="o">;</span><span class="w">¤</span><span class="pm">¶</span></div>
<div class="ln" style="top:371.60px">23</div>
<div style="top:371.60px"><span class="w">»   </span><span class="b">}</span><span class="w">¤</span><span class="pm">¶</span></div>
<div class="ln" style="top:386.00px">24</div>
<div style="top:386.00px"><span class="w">»   </span><span class="w">¤</span><span class="pm">¶</span></div>
<div class="ln" style="top:400.40px">25</div>
<i class="fo" style="top:402.90px"></i>
<div style="top:400.40px"><span class="w">»   </span><span class="k">public</span><span class="w">·</span><span class="k">void</span><span class="w">·</span><span class="md">addPerson</span><span class="b">(</span><span class="c">FormEvent</span><span class="w">·</span><span class="p">ev</span><span class="b">)</span><span class="w">·</span><span class="b">{</span><span class="w">¤</span><span class="pm">¶</span></div>
<div class="ln" style="top:414.80px">26</div>
<div style="top:414.80px"><span class="w">»   »   </span><span class="c">String</span><span class="w">·</span><span class="lv">name</span><span class="o">=</span><span class="p">ev</span><span class="o">.</span><span class="mi">getName</span><span class="b">()</span><span class="o">;</span><span class="w">¤</span><span class="pm">¶</span></div>
<div class="ln" style="top:429.20px">27</div>
<div style="top:429.20px"><span class="w">»   »   </span><span class="c">String</span><span class="w">·</span><span class="lv">occupation</span><span class="o">=</span><span class="p">ev</span><span class="o">.</span><span class="mi">getOccupation</span><span class="b">()</span><span class="o">;</span><span class="w">¤</span><span class="pm">¶</span></div>
<div class="ln" style="top:443.60px">28</div>
<div style="top:443.60px"><span class="w">»   »   </span><span class="k">int</span><span class="w">·</span><span class="lv">ageCatId</span><span class="o">=</span><span class="p">ev</span><span class="o">.</span><span class="mi">getAgeCategory</span><span class="b">()</span><span class="o">;</span><span class="w">¤</span><span class="pm">¶</span></div>
<div class="ln" style="top:458.00px">29</div>
<div style="top:458.00px"><span class="w">»   »   </span><span class="c">String</span><span class="w">·</span><span class="lv">empCat</span><span class="o">=</span><span class="p">ev</span><span class="o">.</span><span class="mi">getEmploymentCategory</span><span class="b">()</span><span class="o">;</span><span class="w">¤</span><span class="pm">¶</span></div>
<div class="ln" style="top:472.40px">30</div>
<div style="top:472.40px"><span class="w">»   »   </span><span class="k">boolean</span><span class="w">·</span><span class="lv">isUs</span><span class="o">=</span><span class="p">ev</span><span class="o">.</span><span class="mi">isUsCitizen</span><span class="b">()</span><span class="o">;</span><span class="w">¤</span><span class="pm">¶</span></div>
<div class="ln" style="top:486.80px">31</div>
<div style="top:486.80px"><span class="w">»   »   </span><span class="c">String</span><span class="w">·</span><span class="lv">taxId</span><span class="o">=</span><span class="p">ev</span><span class="o">.</span><span class="mi">getTaxId</span><span class="b">()</span><span class="o">;</span><span class="w">¤</span><span class="pm">¶</span></div>
<div class="ln" style="top:501.20px">32</div>
<div style="top:501.20px"><span class="w">»   »   </span><span class="c">String</span><span class="w">·</span><span class="lv">gender</span><span class="o">=</span><span class="p">ev</span><span class="o">.</span><span class="mi">getGender</span><span class="b">()</span><span class="o">;</span><span class="w">¤</span><span class="pm">¶</span></div>
<div class="ln" style="top:515.60px">33</div>
<div style="top:515.60px"><span class="w">»   »   </span><span class="w">¤</span><span class="pm">¶</span></div>
<div class="ln" style="top:530.00px">34</div>
<div style="top:530.00px"><span class="w">»   »   </span><span class="e">AgeCategory</span><span class="w">·</span><span class="lv">ageCategory</span><span class="o">=</span><span class="k">null</span><span class="o">;</span><span class="w">¤</span><span class="pm">¶</span></div>
<div class="ln" style="top:544.40px">35</div>
<div style="top:544.40px"><span class="w">»   »   </span><span class="w">¤</span><span class="pm">¶</span></div>
<div class="ln" style="top:558.80px">36</div>
<div style="top:558.80px"><span class="w">»   »   </span><span class="k">switch</span><span class="b">(</span><span class="lr">ageCatId</span><span class="b">)</span><span class="w">·</span><span class="b">{</span><span class="w">¤</span><span class="pm">¶</span></div>
<div class="ln" style="top:573.20px">37</div>
<div style="top:573.20px"><span class="w">»   »   </span><span class="k">case</span><span class="w">·</span><span class="n">0</span><span class="o">:</span><span class="w">¤</span><span class="pm">¶</span></div>
<div class="ln" style="top:587.60px">38</div>
<div style="top:587.60px"><span class="w">»   »   »   </span><span class="lr">ageCategory</span><span class="o">=</span><span class="ei">AgeCategory</span><span class="o">.</span><span class="sf">child</span><span class="o">;</span><span class="w">¤</span><span class="pm">¶</span></div>
<div class="ln" style="top:602.00px">39</div>
<div style="top:602.00px"><span class="w">»   »   »   </span><span class="k">break</span><span class="o">;</span><span class="w">¤</span><span class="pm">¶</span></div>
<div class="ln" style="top:616.40px">40</div>
<div style="top:616.40px"><span class="w">»   »   </span><span class="k">case</span><span class="w">·</span><span class="n">1</span><span class="o">:</span><span class="w">¤</span><span class="pm">¶</span></div>
<div class="ln" style="top:630.80px">41</div>
<div style="top:630.80px"><span class="w">»   »   »   </span><span class="lr">ageCategory</span><span class="o">=</span><span class="ei">AgeCategory</span><span class="o">.</span><span class="sf">adult</span><span class="o">;</span><span class="w">¤</span><span class="pm">¶</span></div>
<div class="ln" style="top:645.20px">42</div>
<div style="top:645.20px"><span class="w">»   »   »   </span><span class="k">break</span><span class="o">;</span><span class="w">¤</span><span class="pm">¶</span></div>
<div class="ln" style="top:659.60px">43</div>
<div style="top:659.60px"><span class="w">»   »   </span><span class="k">case</span><span class="w">·</span><span class="n">2</span><span class="o">:</span><span class="w">¤</span><span class="pm">¶</span></div>
<div class="ln" style="top:674.00px">44</div>
<div style="top:674.00px"><span class="w">»   »   »   </span><span class="lr">ageCategory</span><span class="o">=</span><span class="ei">AgeCategory</span><span class="o">.</span><span class="sf">senior</span><span class="o">;</span><span class="w">¤</span><span class="pm">¶</span></div>
<div class="ln" style="top:688.40px">45</div>
<div style="top:688.40px"><span class="w">»   »   »   </span><span class="k">break</span><span class="o">;</span><span class="w">¤</span><span class="pm">¶</span></div>
<div class="ln" style="top:702.80px">46</div>
<div style="top:702.80px"><span class="w">»   »   </span><span class="b">}</span><span class="w">¤</span><span class="pm">¶</span></div>
<div class="ln" style="top:717.20px">47</div>
<div style="top:717.20px"><span class="w">»   »   </span><span class="w">¤</span><span class="pm">¶</span></div>
<div class="ln" style="top:731.60px">48</div>
<div style="top:731.60px"><span class="w">»   »   </span><span class="e">EmploymentCategory</span><span class="w">·</span><span class="lv">empCategory</span><span class="o">;</span><span class="w">¤</span><span class="pm">¶</span></div>
<div class="ln" style="top:746.00px">49</div>
<div style="top:746.00px"><span class="w">»   »   </span><span class="w">¤</span><span class="pm">¶</span></div>
<div class="ln" style="top:760.40px">50</div>
<div style="top:760.40px"><span class="w">»   »   </span><span class="k">if</span><span class="b">(</span><span class="lr">empCat</span><span class="o">.</span><span class="mi">equals</span><span class="b">(</span><span class="s">"employed"</span><span class="b">))</span><span class="w">·</span><span class="b">{</span><span class="w">¤</span><span class="pm">¶</span></div>
<div class="ln" style="top:774.80px">51</div>
<div style="top:774.80px"><span class="w">»   »   »   </span><span class="lr">empCategory</span><span class="o">=</span><span class="ei">EmploymentCategory</span><span class="o">.</span><span class="sf">employed</span><span class="o">;</span><span class="w">¤</span><span class="pm">¶</span></div>
<div class="ln" style="top:789.20px">52</div>
<div style="top:789.20px"><span class="w">»   »   </span><span class="b">}</span><span class="w">¤</span><span class="pm">¶</span></div>
<div class="ln" style="top:803.60px">53</div>
<div style="top:803.60px"><span class="w">»   »   </span><span class="k">else</span><span class="w">·</span><span class="k">if</span><span class="b">(</span><span class="lr">empCat</span><span class="o">.</span><span class="mi">equals</span><span class="b">(</span><span class="s">"self-employed"</span><span class="b">))</span><span class="w">·</span><span class="b">{</span><span class="w">¤</span><span class="pm">¶</span></div>
</div>
<div style="left:0;top:0;width:100%;height:1px;background:#fff;opacity:.25"></div>
</div>
</body>
</html>
